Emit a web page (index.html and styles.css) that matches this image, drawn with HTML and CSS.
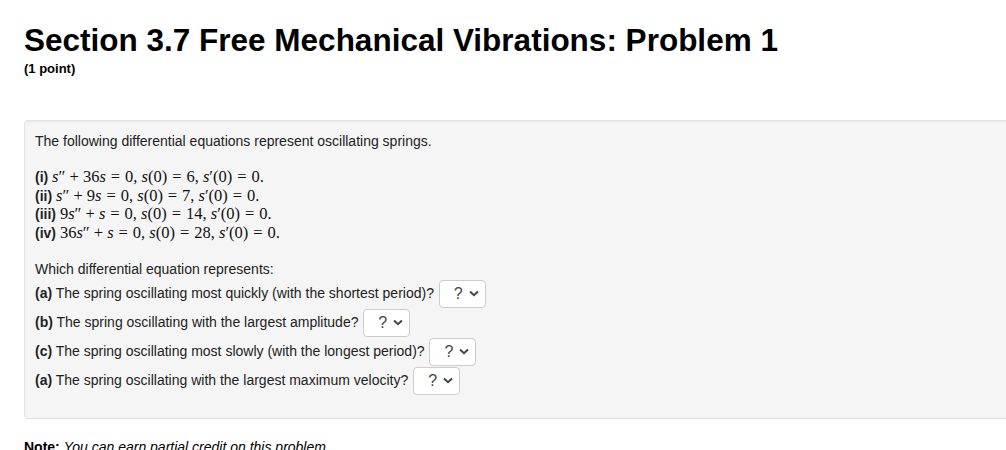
FILE: index.html
```
<!DOCTYPE html>
<html>
<head>
<meta charset="utf-8">
<link rel="stylesheet" href="styles.css">
</head>
<body>
<div class="page">
  <h1 class="title">Section 3.7 Free Mechanical Vibrations: Problem 1</h1>
  <div class="points">(1 point)</div>
  <div class="problem">
    <p class="intro">The following differential equations represent oscillating springs.</p>
    <div class="eqs">
      <div class="eq"><span class="lbl">(i)</span> <span class="m"><i>s</i>″<span class="bin">+</span>36<i>s</i><span class="rel">=</span>0, <i>s</i>(0)<span class="rel">=</span>6, <i>s</i>′(0)<span class="rel">=</span>0.</span></div>
      <div class="eq"><span class="lbl">(ii)</span> <span class="m"><i>s</i>″<span class="bin">+</span>9<i>s</i><span class="rel">=</span>0, <i>s</i>(0)<span class="rel">=</span>7, <i>s</i>′(0)<span class="rel">=</span>0.</span></div>
      <div class="eq"><span class="lbl">(iii)</span> <span class="m">9<i>s</i>″<span class="bin">+</span><i>s</i><span class="rel">=</span>0, <i>s</i>(0)<span class="rel">=</span>14, <i>s</i>′(0)<span class="rel">=</span>0.</span></div>
      <div class="eq"><span class="lbl">(iv)</span> <span class="m">36<i>s</i>″<span class="bin">+</span><i>s</i><span class="rel">=</span>0, <i>s</i>(0)<span class="rel">=</span>28, <i>s</i>′(0)<span class="rel">=</span>0.</span></div>
    </div>
    <p class="which">Which differential equation represents:</p>
    <div class="q"><b>(a)</b> The spring oscillating most quickly (with the shortest period)? <span class="sel"><span class="qm">?</span><svg width="10" height="7" viewBox="0 0 10 7"><path d="M1 1.5 L5 5.2 L9 1.5" fill="none" stroke="#444" stroke-width="2"/></svg></span></div>
    <div class="q"><b>(b)</b> The spring oscillating with the largest amplitude? <span class="sel"><span class="qm">?</span><svg width="10" height="7" viewBox="0 0 10 7"><path d="M1 1.5 L5 5.2 L9 1.5" fill="none" stroke="#444" stroke-width="2"/></svg></span></div>
    <div class="q"><b>(c)</b> The spring oscillating most slowly (with the longest period)? <span class="sel"><span class="qm">?</span><svg width="10" height="7" viewBox="0 0 10 7"><path d="M1 1.5 L5 5.2 L9 1.5" fill="none" stroke="#444" stroke-width="2"/></svg></span></div>
    <div class="q"><b>(a)</b> The spring oscillating with the largest maximum velocity? <span class="sel"><span class="qm">?</span><svg width="10" height="7" viewBox="0 0 10 7"><path d="M1 1.5 L5 5.2 L9 1.5" fill="none" stroke="#444" stroke-width="2"/></svg></span></div>
  </div>
  <p class="note"><b>Note:</b> <i>You can earn partial credit on this problem.</i></p>
</div>
</body>
</html>
```
FILE: styles.css
```
html, body {
  margin: 0;
  padding: 0;
  background: #fff;
  overflow: hidden;
}
body {
  font-family: "Liberation Sans", Arial, sans-serif;
  color: #000;
}
.page {
  padding: 22px 0 0 24px;
}
.title {
  font-size: 31.5px;
  font-weight: bold;
  line-height: 36px;
  margin: 0;
}
.points {
  font-size: 13px;
  font-weight: bold;
  line-height: 16px;
  margin-top: 3px;
}
.problem {
  margin-top: 43px;
  width: 1000px;
  background: #f5f5f5;
  border: 1px solid #e3e3e3;
  border-radius: 4px;
  padding: 11px 10px 23px 10px;
  box-shadow: inset 0 1px 1px rgba(0,0,0,0.05);
  font-size: 14px;
  color: #222;
}
.intro {
  margin: 0 0 18px 0;
  line-height: 18px;
}
.eqs {
  line-height: 18.5px;
}
.eq .lbl {
  font-weight: bold;
  font-size: 14px;
}
.m {
  font-family: "Liberation Serif", "Times New Roman", serif;
  font-size: 16.5px;
  color: #111;
}
.m i {
  font-style: italic;
}
.bin {
  margin: 0 0.25em;
}
.rel {
  margin: 0 0.3em;
}
.which {
  margin: 18px 0 1px 0;
  line-height: 18px;
}
.q {
  line-height: 29px;
  display: flex;
  align-items: center;
  gap: 1px;
  white-space: pre;
}
.q b {
  margin-right: -1px;
}
.sel {
  display: inline-flex;
  align-items: center;
  justify-content: space-between;
  box-sizing: border-box;
  width: 47px;
  height: 28px;
  border: 1px solid #ccc;
  border-radius: 4px;
  background: #fff;
  padding: 0 6px 0 14px;
  color: #444;
  line-height: 1;
}
.qm {
  font-size: 16px;
}
.note {
  margin: 20px 0 0 0;
  font-size: 14px;
}
```
